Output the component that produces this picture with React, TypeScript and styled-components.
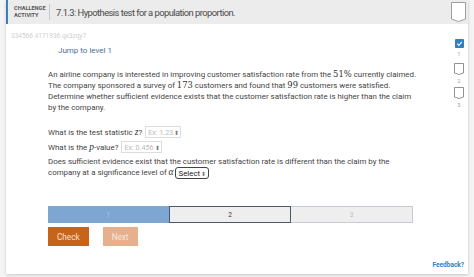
import React from "react";
import styled, { createGlobalStyle } from "styled-components";

const GlobalStyle = createGlobalStyle`
  html, body { margin: 0; padding: 0; background: #f4f4f4; }
  body { font-family: Roboto, "Liberation Sans", sans-serif; color: #454545; }
`;

const Page = styled.div`
  width: 474px;
  height: 277px;
  padding: 0 6px 3px 6px;
  box-sizing: border-box;
`;

const Card = styled.div`
  background: #fff;
  height: 274px;
  box-shadow: 0 1px 3px rgba(0, 0, 0, 0.18);
  display: flex;
  flex-direction: column;
`;

const Header = styled.div`
  display: flex;
  align-items: center;
  height: 24px;
  background: #ececec;
  border-left: 2px solid #3a7fc1;
  padding-left: 6px;
  padding-right: 2px;
`;

const Caption = styled.div`
  font-size: 5.6px;
  font-weight: 700;
  line-height: 7px;
  color: #555;
  width: 34px;
`;

const Divider = styled.div`
  width: 1px;
  height: 16px;
  background: #c8c8c8;
  margin: 0 6px 0 1px;
`;

const Title = styled.div`
  flex: 1;
  font-size: 9.4px;
  letter-spacing: -0.55px;
  color: #4a4a4a;
`;

const Body = styled.div`
  display: grid;
  grid-template-columns: 1fr 18px;
`;

const Main = styled.div`
  display: flex;
  flex-direction: column;
  padding: 8px 0 0 5px;
`;

const Code = styled.div`
  font-size: 6.5px;
  color: #cfcfcf;
  height: 8px;
`;

const Content = styled.div`
  padding-left: 37px;
  display: flex;
  flex-direction: column;
`;

const JumpLink = styled.div`
  font-size: 8px;
  color: #4a6f96;
  margin: 6px 0 0 10px;
`;

const Paragraph = styled.p`
  margin: 14px 0 0 0;
  font-size: 7.9px;
  line-height: 11px;
  white-space: nowrap;
`;

const Num = styled.span`
  font-family: "DejaVu Serif", "Liberation Serif", serif;
  font-size: 8.4px;
  color: #333;
`;

const Var = styled.span`
  font-family: "Liberation Serif", serif;
  font-style: italic;
  font-size: 9.5px;
  color: #333;
`;

const Question = styled.div<{ $mt: number }>`
  font-size: 7.9px;
  line-height: 11px;
  display: flex;
  align-items: center;
  margin-top: ${(p) => p.$mt}px;
`;

const Block = styled.div`
  font-size: 7.9px;
  line-height: 11px;
  margin-top: 3px;
  white-space: nowrap;
`;

const NumInput = styled.span`
  display: inline-flex;
  align-items: center;
  border: 1px solid #ddd;
  height: 10px;
  padding: 0 1px 0 2px;
  margin-left: 3px;
  font-size: 7.2px;
  color: #bbb;
`;

const Spin = styled.span`
  font-size: 6px;
  color: #777;
  margin-left: 1px;
`;

const Select = styled.span`
  display: inline-flex;
  align-items: center;
  border: 1px solid #444;
  border-radius: 3px;
  height: 10px;
  padding: 0 2px 0 3px;
  font-size: 7.8px;
  color: #222;
  margin-left: 1px;
  vertical-align: middle;
`;

const Progress = styled.div`
  display: flex;
  margin-top: 27px;
  width: 365px;
  height: 17px;
`;

const Segment = styled.div<{ $state: "done" | "active" | "todo" }>`
  flex: 1;
  display: flex;
  align-items: center;
  justify-content: center;
  font-size: 6.5px;
  box-sizing: border-box;
  background: ${(p) => (p.$state === "done" ? "#7ea6d3" : "#eeeeee")};
  color: ${(p) => (p.$state === "done" ? "#aac6e6" : p.$state === "active" ? "#333" : "#bbb")};
  border: ${(p) =>
    p.$state === "active" ? "1.5px solid #4a5a6e" : p.$state === "todo" ? "1px solid #c8ccd2" : "none"};
  border-left: ${(p) => (p.$state === "todo" ? "none" : undefined)};
`;

const Buttons = styled.div`
  display: flex;
  gap: 14px;
  margin-top: 4px;
`;

const Button = styled.div<{ $disabled?: boolean }>`
  height: 19px;
  padding: 0 9px;
  display: flex;
  align-items: center;
  font-size: 8.2px;
  color: ${(p) => (p.$disabled ? "#f8e6da" : "#f4e2d6")};
  background: ${(p) => (p.$disabled ? "#e6b08c" : "#c8641a")};
`;

const Footer = styled.div`
  display: flex;
  justify-content: flex-end;
  margin-top: auto;
  padding: 0 4px 5px 0;
  font-size: 6.5px;
  font-weight: 700;
  color: #2f7fc1;
`;

const Side = styled.div`
  display: flex;
  flex-direction: column;
  align-items: center;
  padding-top: 15px;
`;

const Level = styled.div`
  display: flex;
  flex-direction: column;
  align-items: center;
  gap: 3px;
  font-size: 5px;
  color: #999;
  line-height: 6px;
  height: 24px;
`;

const Bookmark = () => (
  <svg width={10} height={12} viewBox="0 0 10 12">
    <path d="M0.5 0.5 H9.5 V10 L5 11.5 L0.5 10 Z" fill="#fff" stroke="#777" strokeWidth="0.8" />
  </svg>
);

const Checked = () => (
  <svg width={9} height={9} viewBox="0 0 10 10">
    <rect x="0" y="0" width="10" height="10" rx="1" fill="#2f7fc1" />
    <path d="M2.5 5.2 L4.3 7 L7.6 3.3" fill="none" stroke="#fff" strokeWidth="1.3" />
  </svg>
);

export default function App() {
  return (
    <>
      <GlobalStyle />
      <Page>
        <Card>
          <Header>
            <Caption>
              CHALLENGE
              <br />
              ACTIVITY
            </Caption>
            <Divider />
            <Title>7.1.3: Hypothesis test for a population proportion.</Title>
            <svg width={15} height={20} viewBox="0 0 15 20">
              <path d="M0.5 0.5 H14.5 V17 L7.5 19.5 L0.5 17 Z" fill="#fff" stroke="#888" strokeWidth="0.8" />
            </svg>
          </Header>
          <Body>
            <Main>
              <Code>334566.4171936.qx3zqy7</Code>
              <Content>
                <JumpLink>Jump to level 1</JumpLink>
                <Paragraph>
                  An airline company is interested in improving customer satisfaction rate from the <Num>51%</Num>{" "}
                  currently claimed.
                  <br />
                  The company sponsored a survey of <Num>173</Num> customers and found that <Num>99</Num> customers
                  were satisfied.
                  <br />
                  Determine whether sufficient evidence exists that the customer satisfaction rate is higher than the
                  claim
                  <br />
                  by the company.
                </Paragraph>
                <Question $mt={13}>
                  What is the test statistic&nbsp;<Var>z</Var>?
                  <NumInput>
                    Ex: 1.23<Spin>⬍</Spin>
                  </NumInput>
                </Question>
                <Question $mt={3}>
                  What is the&nbsp;<Var>p</Var>-value?
                  <NumInput>
                    Ex: 0.456<Spin>⬍</Spin>
                  </NumInput>
                </Question>
                <Block>
                  Does sufficient evidence exist that the customer satisfaction rate is different than the claim by the
                  <br />
                  company at a significance level of <Var>α</Var>
                  <Select>
                    Select <Spin>⬍</Spin>
                  </Select>
                </Block>
                <Progress>
                  <Segment $state="done">1</Segment>
                  <Segment $state="active">2</Segment>
                  <Segment $state="todo">3</Segment>
                </Progress>
                <Buttons>
                  <Button>Check</Button>
                  <Button $disabled>Next</Button>
                </Buttons>
              </Content>
            </Main>
            <Side>
              <Level>
                <Checked />1
              </Level>
              <Level>
                <Bookmark />2
              </Level>
              <Level>
                <Bookmark />3
              </Level>
            </Side>
          </Body>
          <Footer>Feedback?</Footer>
        </Card>
      </Page>
    </>
  );
}
